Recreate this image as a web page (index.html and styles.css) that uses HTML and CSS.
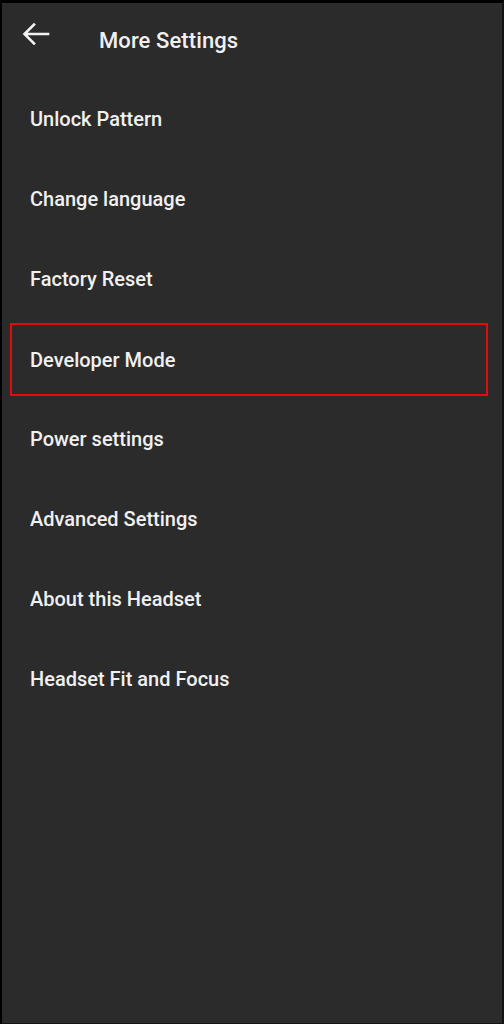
FILE: index.html
```html
<!DOCTYPE html>
<html>
<head>
<meta charset="utf-8">
<link rel="stylesheet" href="styles.css">
</head>
<body>
<div class="screen">
  <header class="topbar">
    <span class="back">
      <svg width="28" height="24" viewBox="0 0 28 24"><path d="M26 12H3M12 2.5L2.5 12 12 21.5" fill="none" stroke="#f2f2f2" stroke-width="2.6" stroke-linecap="square"/></svg>
    </span>
    <h1 class="title">More Settings</h1>
  </header>
  <ul class="menu">
    <li class="item">Unlock Pattern</li>
    <li class="item">Change language</li>
    <li class="item">Factory Reset</li>
    <li class="item highlight">Developer Mode</li>
    <li class="item">Power settings</li>
    <li class="item">Advanced Settings</li>
    <li class="item">About this Headset</li>
    <li class="item">Headset Fit and Focus</li>
  </ul>
</div>
</body>
</html>
```

FILE: styles.css
```css
html, body {
  margin: 0;
  padding: 0;
  background: #000;
}
.screen {
  box-sizing: border-box;
  width: 504px;
  height: 1024px;
  background: #2b2b2b;
  border-top: 3px solid #000;
  border-left: 2px solid #000;
  border-right: 2px solid #141414;
  border-bottom: 1px solid #141414;
  font-family: Roboto, "Noto Sans", sans-serif;
  color: #f0f0f0;
}
.topbar {
  display: flex;
  align-items: center;
  height: 76px;
  padding-left: 20px;
}
.back {
  display: flex;
  width: 28px;
  height: 24px;
  margin-top: -14px;
}
.title {
  margin: -2px 0 0 49px;
  font-size: 22px;
  font-weight: 500;
  letter-spacing: 0.1px;
}
.menu {
  list-style: none;
  margin: 0;
  padding: 0;
}
.item {
  box-sizing: border-box;
  height: 80px;
  display: flex;
  align-items: center;
  padding-left: 28px;
  font-size: 20px;
  font-weight: 500;
}
.highlight {
  height: 73px;
  margin: 4px 14px 3px 8px;
  padding-left: 18px;
  border: 2px solid #e00d0d;
}
```
